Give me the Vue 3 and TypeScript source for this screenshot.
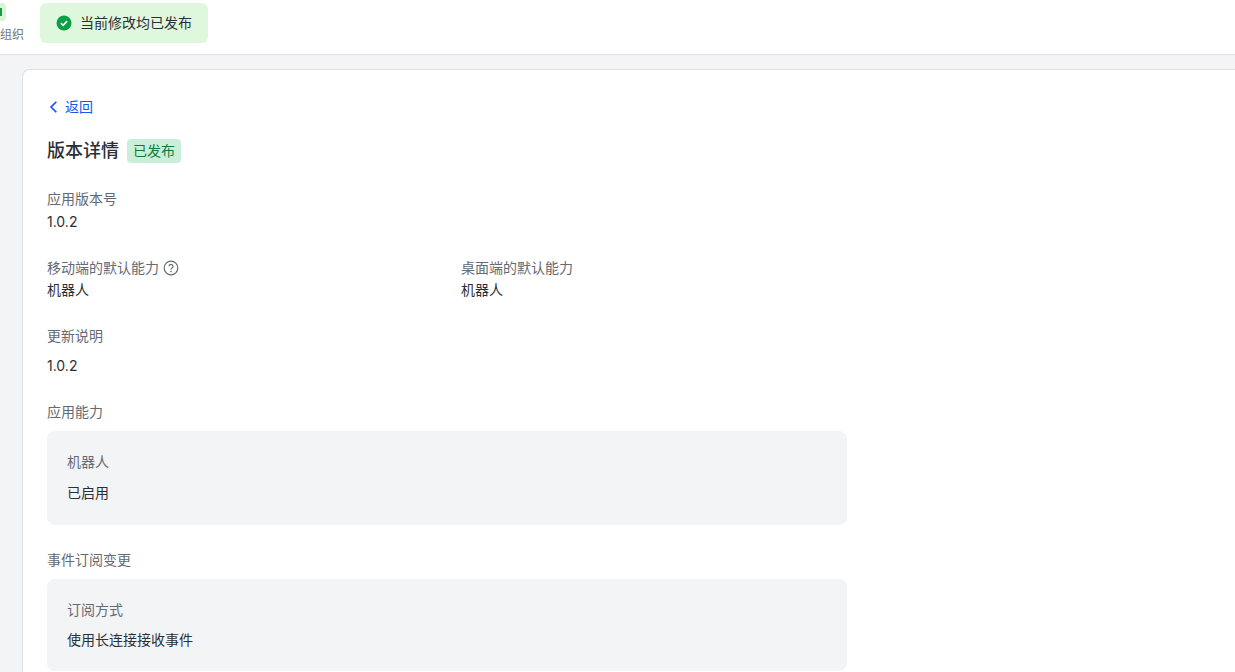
<script setup lang="ts">
const capabilities = [
  { title: '应用能力', head: '机器人', value: '已启用', loose: true },
  { title: '事件订阅变更', head: '订阅方式', value: '使用长连接接收事件', loose: false },
]
</script>

<template>
  <div class="page">
    <header class="topbar">
      <div class="nav-item">
        <span class="nav-badge"><i class="nav-dot"></i></span>
        <span class="nav-label">组织</span>
      </div>
      <div class="toast">
        <svg class="toast-ic" viewBox="0 0 16 16" aria-hidden="true">
          <circle cx="8" cy="8" r="7.5" fill="#0a9f45" />
          <path d="M4.9 8.2l2.2 2.1 4-4.2" fill="none" stroke="#fff" stroke-width="1.6" />
        </svg>
        <span>当前修改均已发布</span>
      </div>
    </header>

    <main class="content">
      <section class="card">
        <a class="back">
          <svg class="back-ic" viewBox="0 0 12 12" aria-hidden="true">
            <path d="M8 1.5L3.5 6 8 10.5" fill="none" stroke="currentColor" stroke-width="1.5" />
          </svg>
          返回
        </a>

        <div class="title-row">
          <h1 class="title">版本详情</h1>
          <span class="tag">已发布</span>
        </div>

        <div class="field version">
          <div class="label">应用版本号</div>
          <div class="value">1.0.2</div>
        </div>

        <div class="two-col">
          <div class="field">
            <div class="label">
              移动端的默认能力
              <svg class="help" viewBox="0 0 16 16" aria-hidden="true">
                <circle cx="8" cy="8" r="6.8" fill="none" stroke="currentColor" stroke-width="1.2" />
                <path d="M6 6.3a2 2 0 1 1 3 1.8c-.7.4-1 .8-1 1.5" fill="none" stroke="currentColor" stroke-width="1.2" />
                <circle cx="8" cy="11.6" r=".8" fill="currentColor" />
              </svg>
            </div>
            <div class="value">机器人</div>
          </div>
          <div class="field">
            <div class="label">桌面端的默认能力</div>
            <div class="value">机器人</div>
          </div>
        </div>

        <div class="notes">
          <div class="label">更新说明</div>
          <div class="value">1.0.2</div>
        </div>

        <div v-for="c in capabilities" :key="c.title" class="block">
          <div class="label">{{ c.title }}</div>
          <div class="panel" :class="{ loose: c.loose }">
            <div class="label">{{ c.head }}</div>
            <div class="value">{{ c.value }}</div>
          </div>
        </div>
      </section>
    </main>
  </div>
</template>

<style>
html,
body {
  margin: 0;
  overflow: hidden;
}
</style>

<style scoped>
.page {
  width: 1235px;
  height: 672px;
  overflow: hidden;
  background: #f3f4f6;
  font-family: Inter, "Noto Sans CJK SC", sans-serif;
  font-size: 14px;
  line-height: 22px;
  color: #2b2f36;
}

.topbar {
  display: flex;
  align-items: flex-start;
  height: 54px;
  background: #fff;
  border-bottom: 1px solid #dee0e3;
}

.nav-item {
  display: flex;
  flex-direction: column;
  align-items: flex-end;
  width: 24px;
  flex: none;
}
.nav-badge {
  display: flex;
  align-items: center;
  align-self: flex-start;
  width: 6px;
  height: 18px;
  margin-top: 3px;
  background: #d9f5d6;
  border-radius: 0 4px 4px 0;
}
.nav-dot {
  width: 2px;
  height: 8px;
  background: #1a9a4a;
}
.nav-label {
  margin-top: 4px;
  font-size: 12px;
  line-height: 20px;
  color: #73777d;
}

.toast {
  display: flex;
  align-items: center;
  gap: 8px;
  height: 40px;
  margin: 3px 0 0 16px;
  padding: 0 16px;
  background: #dff7dc;
  border-radius: 6px;
}
.toast-ic {
  width: 16px;
  height: 16px;
}

.content {
  padding: 14px 0 0 22px;
}

.card {
  height: 640px;
  padding: 26px 24px 0;
  background: #fff;
  border: 1px solid #dee0e3;
  border-right: 0;
  border-radius: 8px 0 0 0;
}

.back {
  display: flex;
  align-items: center;
  gap: 4px;
  color: #1456f0;
}
.back-ic {
  width: 14px;
  height: 14px;
}

.title-row {
  display: flex;
  align-items: center;
  gap: 8px;
  margin-top: 21px;
}
.title {
  margin: 0;
  font-size: 18px;
  line-height: 24px;
  font-weight: 500;
  color: #2b2f36;
}
.tag {
  padding: 0 6px;
  line-height: 24px;
  color: #127a3e;
  background: #caefd8;
  border-radius: 4px;
}

.label {
  display: flex;
  align-items: center;
  gap: 4px;
  color: #646a73;
}

.field.version {
  margin-top: 25px;
}
.field .value {
  margin-top: 1px;
}

.two-col {
  display: grid;
  grid-template-columns: 414px 1fr;
  margin-top: 23px;
}
.two-col .value {
  margin-top: 0;
}
.two-col .field {
  padding-top: 1px;
}
.help {
  width: 16px;
  height: 16px;
}

.notes {
  margin-top: 24px;
}
.notes .value {
  margin-top: 8px;
}

.block {
  width: 800px;
  margin-top: 24px;
}
.panel {
  margin-top: 8px;
  padding: 20px;
  background: #f3f4f6;
  border-radius: 8px;
}
.panel .value {
  margin-top: 8px;
}
.panel.loose {
  padding-bottom: 21px;
}
.panel.loose .value {
  margin-top: 9px;
}
</style>
